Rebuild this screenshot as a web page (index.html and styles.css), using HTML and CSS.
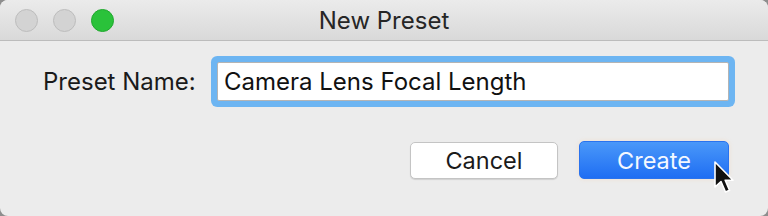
FILE: index.html
```html
<!DOCTYPE html>
<html>
<head>
<meta charset="utf-8">
<link rel="stylesheet" href="styles.css">
</head>
<body>
<div class="window">
  <div class="titlebar">
    <div class="lights">
      <span class="light grey"></span>
      <span class="light grey"></span>
      <span class="light green"></span>
    </div>
    <div class="title">New Preset</div>
  </div>
  <div class="content">
    <div class="row">
      <label class="label">Preset Name:</label>
      <div class="field">Camera Lens Focal Length</div>
    </div>
    <div class="buttons">
      <button class="btn cancel">Cancel</button>
      <button class="btn create">Create</button>
    </div>
  </div>
  <svg class="cursor" width="24" height="34" viewBox="0 0 24 34">
    <path d="M2 1 L2 26 L8 20.5 L12.5 31 L16.5 29.3 L12.2 19.2 L20 19.2 Z" fill="#111" stroke="#fff" stroke-width="1.6" stroke-linejoin="round"/>
  </svg>
</div>
</body>
</html>
```

FILE: styles.css
```css
html, body {
  margin: 0;
  padding: 0;
  background: #8e8e8e;
}
body {
  width: 768px;
  height: 216px;
  overflow: hidden;
  font-family: Inter, "Helvetica Neue", "Liberation Sans", sans-serif;
}
.window {
  position: relative;
  width: 768px;
  height: 216px;
  background: #ececec;
  border-radius: 8px;
  overflow: hidden;
}
.titlebar {
  position: relative;
  height: 40px;
  background: linear-gradient(#ebebeb, #d9d9d9);
  border-bottom: 1px solid #bcbcbc;
  display: flex;
  align-items: center;
  justify-content: center;
}
.lights {
  position: absolute;
  left: 15px;
  top: 9px;
  display: flex;
  gap: 15px;
}
.light {
  width: 23px;
  height: 23px;
  border-radius: 50%;
  box-sizing: border-box;
}
.light.grey {
  background: #d3d3d3;
  border: 1px solid #bdbdbd;
}
.light.green {
  background: #2ac23a;
  border: 1px solid #20a82e;
}
.title {
  font-size: 24px;
  color: #262626;
}
.content {
  padding: 21px 39px 0 43px;
}
.row {
  display: flex;
  align-items: center;
  gap: 22px;
}
.label {
  font-size: 24px;
  color: #1a1a1a;
  width: 152px;
  white-space: nowrap;
}
.field {
  flex: 1;
  height: 39px;
  box-sizing: border-box;
  background: #fff;
  border: 1px solid #b4b4b4;
  box-shadow: 0 0 0 6px #6db5f2;
  border-radius: 2px;
  padding: 0 0 0 6px;
  font-size: 24px;
  color: #111;
  display: flex;
  align-items: center;
  white-space: nowrap;
}
.buttons {
  display: flex;
  justify-content: flex-end;
  gap: 21px;
  margin-top: 40px;
}
.btn {
  font-family: inherit;
  font-size: 23.5px;
  height: 37px;
  border-radius: 5px;
  box-sizing: border-box;
  padding: 0;
}
.cancel {
  width: 148px;
  background: #fff;
  color: #1a1a1a;
  border: 1px solid #c4c4c4;
  box-shadow: 0 1px 1px rgba(0,0,0,0.12);
  margin-top: 1px;
}
.create {
  width: 150px;
  height: 38px;
  background: linear-gradient(#4a98f9, #1f6ef3);
  color: #f4f8ff;
  border: 1px solid #2a73ee;
  box-shadow: 0 0 4px rgba(255,200,150,0.35);
}
.cursor {
  position: absolute;
  left: 713px;
  top: 161px;
}
```
